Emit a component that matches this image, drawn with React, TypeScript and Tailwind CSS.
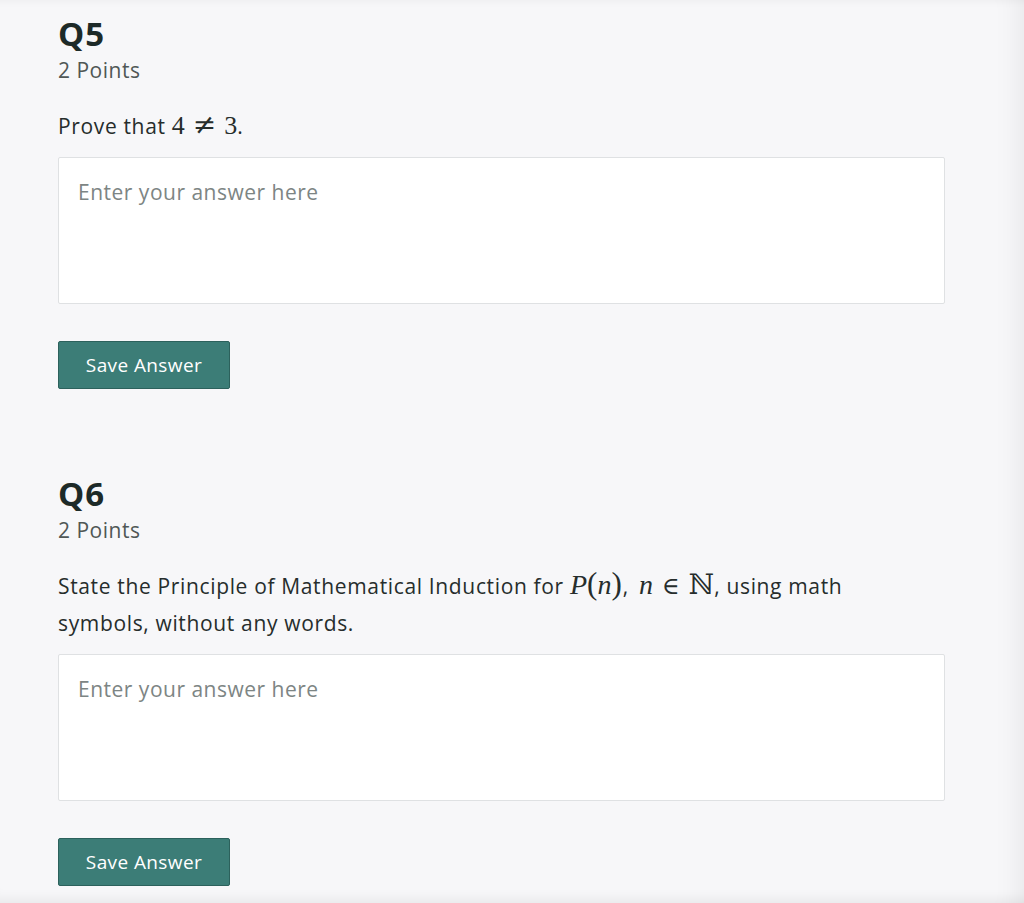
import React from 'react';

const math = { fontFamily: '"Liberation Serif", "DejaVu Serif", serif', letterSpacing: 0 };

interface QuestionProps {
  num: number;
  points: number;
  children: React.ReactNode;
}

const Question: React.FC<QuestionProps> = ({ num, points, children }) => (
  <section className="flex flex-col">
    <h2 className="text-[33px] leading-[36px] font-bold text-[#1d2a28] tracking-[1px]">Q{num}</h2>
    <p className="text-[21px] leading-[28px] text-[#505756] mt-[4px] tracking-[0.5px]">{points} Points</p>
    <div className="text-[21px] leading-[37px] text-[#262d2c] mt-[24px] max-w-[830px] tracking-[0.65px]">{children}</div>
    <textarea
      placeholder="Enter your answer here"
      className="mt-[12px] h-[147px] w-[887px] resize-none bg-white border border-[#dfe1e3] rounded-[2px] px-[19px] py-[21px] text-[21px] leading-[26px] tracking-[0.5px] text-[#262d2c] placeholder:text-[#7d8584] outline-none"
    />
    <button className="mt-[37px] w-[172px] h-[48px] bg-[#3c7d77] border border-[#2c615c] rounded-[2px] text-white text-[19px] tracking-[0.4px]">
      Save Answer
    </button>
  </section>
);

export default function App() {
  return (
    <div
      className="w-[1024px] h-[903px] overflow-hidden bg-[#f7f7f9] shadow-[inset_-30px_0_30px_-28px_rgba(0,0,0,0.08),inset_0_10px_10px_-10px_rgba(0,0,0,0.06),inset_0_-14px_14px_-12px_rgba(0,0,0,0.08)]"
      style={{ fontFamily: '"Open Sans", Lato, sans-serif' }}
    >
      <div className="pl-[58px] pt-[16px] flex flex-col gap-[87px]">
        <Question num={5} points={2}>
          Prove that{' '}
          <span style={math} className="text-[26px] leading-[20px]">
            4<span className="mx-[8px] text-[28px]" style={{ fontFamily: '"DejaVu Serif", serif' }}>≠</span>3
          </span>
          .
        </Question>
        <Question num={6} points={2}>
          State the Principle of Mathematical Induction for{' '}
          <span style={math} className="text-[28px] leading-[20px]">
            <i>P</i>
            <span className="text-[31px]">(</span>
            <i>n</i>
            <span className="text-[31px] mr-[1px]">)</span>
          </span>
          ,{' '}
          <span style={math} className="text-[28px] leading-[20px] ml-[4px]">
            <i>n</i>
            <span className="mx-[9px] text-[24px]">∈</span>
            ℕ
          </span>
          , using math symbols, without any words.
        </Question>
      </div>
    </div>
  );
}
